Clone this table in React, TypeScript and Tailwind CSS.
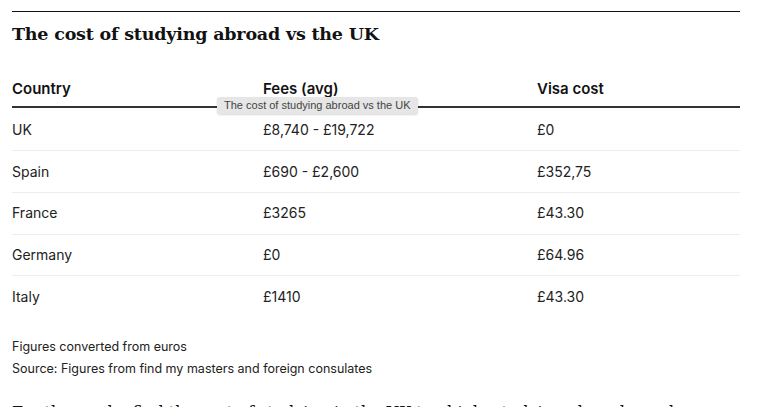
const ROWS = [
  { country: "UK", fees: "£8,740 - £19,722", visa: "£0" },
  { country: "Spain", fees: "£690 - £2,600", visa: "£352,75" },
  { country: "France", fees: "£3265", visa: "£43.30" },
  { country: "Germany", fees: "£0", visa: "£64.96" },
  { country: "Italy", fees: "£1410", visa: "£43.30" },
];

const sans = "font-['Inter','Liberation_Sans',sans-serif]";

export default function App() {
  return (
    <div className="relative h-[407px] w-[759px] overflow-hidden bg-white">
      <div className="ml-3 w-[728px] pt-[11px]">
        {/* titre */}
        <div className="border-t border-[#121212] pt-[10px]">
          <h2 className="font-['DejaVu_Serif',serif] text-[17.5px] font-bold leading-6 tracking-[-0.2px] text-[#121212]">
            The cost of studying abroad vs the UK
          </h2>
        </div>

        {/* tableau */}
        <div className={`mt-[33px] ${sans} text-[#121212]`}>
          <div className="grid grid-cols-[251px_274px_1fr] border-b-2 border-[#333] pb-[7px] text-[15px] font-semibold leading-5">
            <span>Country</span>
            <span>Fees (avg)</span>
            <span>Visa cost</span>
          </div>
          <div className="pt-[1.5px]">
            {ROWS.map((r, i) => (
              <div
                key={r.country}
                className={`grid h-[41.7px] grid-cols-[251px_274px_1fr] items-center text-[14px] leading-5 text-[#222] ${
                  i < ROWS.length - 1 ? "border-b border-[#ececec]" : ""
                }`}
              >
                <span>{r.country}</span>
                <span>{r.fees}</span>
                <span>{r.visa}</span>
              </div>
            ))}
          </div>
        </div>

        {/* notes */}
        <div className={`mt-[18.5px] ${sans} text-[12.5px] leading-[22px] text-[#222]`}>
          <p>Figures converted from euros</p>
          <p>Source: Figures from find my masters and foreign consulates</p>
        </div>

        <p className="mt-[21px] font-['DejaVu_Serif',serif] text-[16px] leading-6 text-[#121212]">
          For those who find the cost of studying in the UK too high, studying abroad may be an option
        </p>
      </div>

      {/* infobulle native */}
      <div className="absolute left-[217px] top-[97px] rounded-[3px] bg-[#e6e6e6] px-[7px] py-[2px] font-['Liberation_Sans',sans-serif] text-[11px] leading-[13px] text-[#444] shadow-[0_1px_2px_rgba(0,0,0,0.15)]">
        The cost of studying abroad vs the UK
      </div>
    </div>
  );
}
